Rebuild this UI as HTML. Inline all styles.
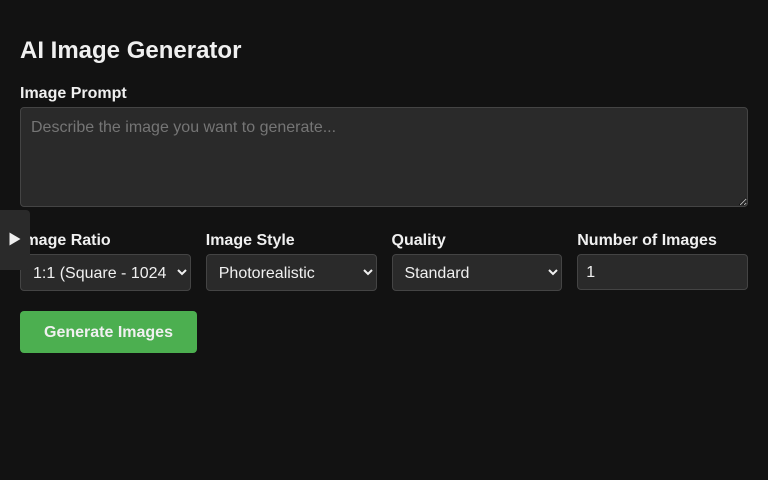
<!DOCTYPE html>
<html>
<head>
<meta charset="utf-8">
<style>
*{box-sizing:border-box}
html,body{margin:0;padding:0;width:768px;height:480px;overflow:hidden;background:#121212;color:#f0f0f0;font-family:"Liberation Sans",sans-serif;font-size:16px}
h1{position:absolute;left:20px;top:37px;margin:0;font-size:24px;line-height:28px;font-weight:700;color:#f0f0f0}
label{position:absolute;font-weight:700;font-size:16px;line-height:18px;color:#f0f0f0;white-space:nowrap}
textarea{position:absolute;left:20px;top:107px;width:728px;height:100px;background:#2a2a2a;border:1px solid #444;border-radius:4px;color:#f0f0f0;font-family:"Liberation Sans",sans-serif;font-size:16px;padding:11px 10px 9px;margin:0;resize:vertical;outline:none}
textarea::placeholder{color:#757575;opacity:1}
select{position:absolute;top:254px;width:170.75px;height:37px;background:#2a2a2a;border:1px solid #444;border-radius:4px;color:#f0f0f0;font-family:"Liberation Sans",sans-serif;font-size:16px;padding:9px 8px 7px;margin:0;outline:none}
input{position:absolute;left:577.25px;top:254px;width:170.75px;height:36px;background:#2a2a2a;border:1px solid #444;border-radius:4px;color:#f0f0f0;font-family:"Liberation Sans",sans-serif;font-size:16px;padding:9px 8px 7px;margin:0;outline:none}
button.gen{position:absolute;left:20px;top:311px;width:177px;height:42px;background:#4caf50;border:0;border-radius:4px;color:#f0f0f0;font-family:"Liberation Sans",sans-serif;font-size:16px;font-weight:700;padding:2px 0 0;margin:0}
.tab{position:absolute;left:0;top:210px;width:30px;height:60px;background:#2a2a2a;border-radius:0 4px 4px 0}
.tab svg{position:absolute;left:9px;top:22px}
</style>
</head>
<body>
<h1>AI Image Generator</h1>
<label style="left:20px;top:85px">Image Prompt</label>
<textarea placeholder="Describe the image you want to generate..."></textarea>
<label style="left:20px;top:232px">Image Ratio</label>
<select style="left:20px"><option>1:1 (Square - 1024x1024)</option></select>
<label style="left:205.75px;top:232px">Image Style</label>
<select style="left:205.75px"><option>Photorealistic</option></select>
<label style="left:391.5px;top:232px">Quality</label>
<select style="left:391.5px"><option>Standard</option></select>
<label style="left:577.25px;top:232px">Number of Images</label>
<input type="number" value="1">
<button class="gen">Generate Images</button>
<div class="tab"><svg width="12" height="14" viewBox="0 0 12 14"><path d="M0.5 0.5 L11.5 7 L0.5 13.5 Z" fill="#f0f0f0"/></svg></div>
</body>
</html>
